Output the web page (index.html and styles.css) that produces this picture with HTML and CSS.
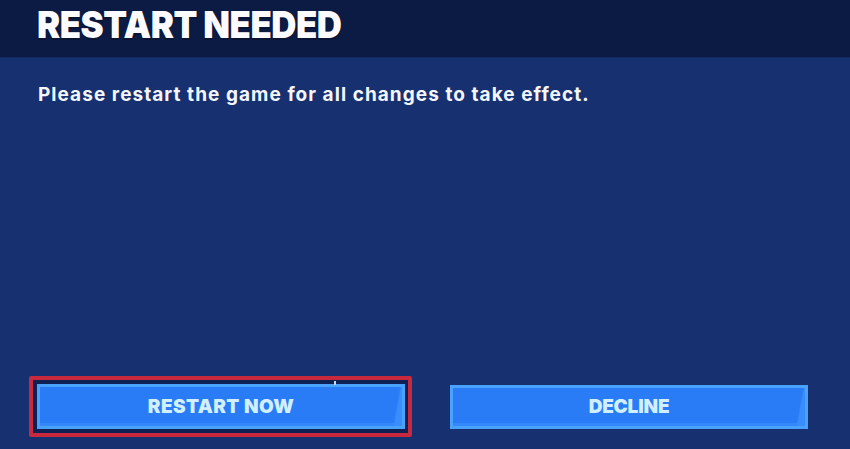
FILE: index.html
```html
<!DOCTYPE html>
<html>
<head>
<meta charset="utf-8">
<link rel="stylesheet" href="styles.css">
</head>
<body>
<div class="screen">
  <header class="header">
    <h1 class="title">RESTART NEEDED</h1>
  </header>
  <p class="message">Please restart the game for all changes to take effect.</p>
  <div class="actions">
    <div class="focus-ring">
      <button class="btn">RESTART NOW</button>
      <span class="cursor"></span>
    </div>
    <button class="btn btn-decline">DECLINE</button>
  </div>
</div>
</body>
</html>
```
FILE: styles.css
```css
html, body {
  margin: 0;
  padding: 0;
  background: #17306f;
}
.screen {
  width: 850px;
  height: 449px;
  display: flex;
  flex-direction: column;
  font-family: Inter, "Liberation Sans", sans-serif;
  overflow: hidden;
}
.header {
  height: 58px;
  background: #0c1b44;
  border-bottom: 1px solid #142a62;
  box-sizing: border-box;
  padding: 0 0 9px 37px;
  display: flex;
  align-items: center;
}
.title {
  margin: 0;
  color: #fbfbff;
  font-size: 37px;
  font-weight: 900;
  letter-spacing: -0.5px;
  line-height: 1;
  text-shadow: 0 2px 0 #0a1535, 1px 1px 0 #0a1535, -1px 1px 0 #0a1535;
  transform: scaleX(0.94);
  transform-origin: left center;
}
.message {
  margin: 25px 0 0 38px;
  color: #f4f6ff;
  font-size: 19px;
  font-weight: 700;
  letter-spacing: 1.05px;
  line-height: 24px;
}
.actions {
  margin-top: auto;
  padding: 0 0 12px 29px;
  display: flex;
  align-items: center;
  gap: 38px;
}
.focus-ring {
  position: relative;
  width: 383px;
  height: 61px;
  box-sizing: border-box;
  border: 4px solid #c8293d;
  border-radius: 2px;
  padding: 4px 3px 4px 4px;
  background: #0f2154;
}
.btn {
  display: block;
  width: 100%;
  height: 45px;
  box-sizing: border-box;
  border: 3px solid #4aa2ff;
  background:
    linear-gradient(100deg, transparent 97.5%, #3a8efc 98%),
    linear-gradient(0deg, #3488fa 0, #3488fa 3px, transparent 3px),
    #2a7bf6;
  color: #d0efff;
  font-family: Inter, "Liberation Sans", sans-serif;
  font-size: 19px;
  font-weight: 900;
  letter-spacing: 0.4px;
  padding: 0;
  cursor: pointer;
}
.btn-decline {
  width: 358px;
  height: 44px;
  letter-spacing: -0.2px;
}
.cursor {
  position: absolute;
  left: 301px;
  top: 1px;
  width: 2px;
  height: 4px;
  background: #c8d8ff;
}
```
